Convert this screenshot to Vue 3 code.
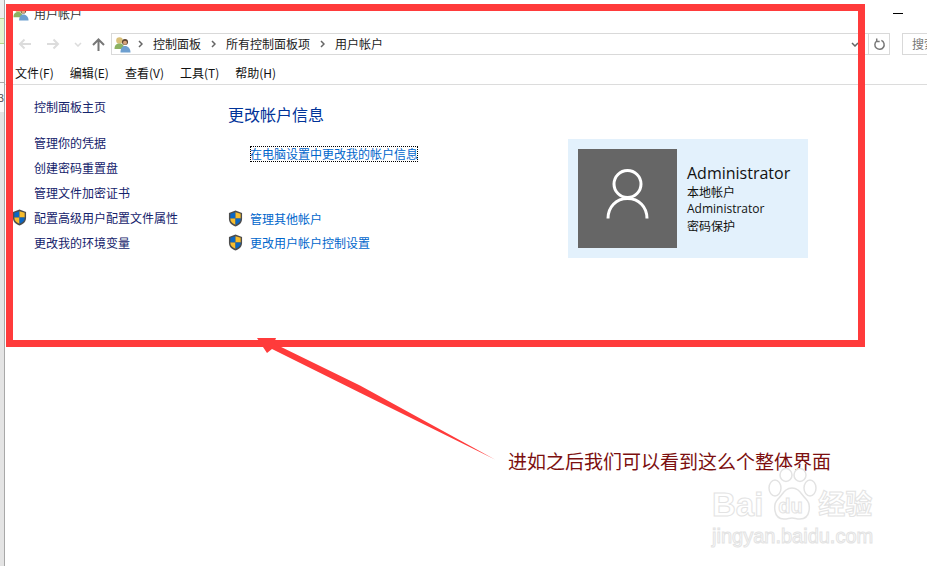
<script setup>
const crumbs = ['控制面板', '所有控制面板项', '用户帐户']
const menus = ['文件(F)', '编辑(E)', '查看(V)', '工具(T)', '帮助(H)']
const tasks = [
  { label: '管理你的凭据' },
  { label: '创建密码重置盘' },
  { label: '管理文件加密证书' },
  { label: '配置高级用户配置文件属性', shield: true },
  { label: '更改我的环境变量' }
]
const links = ['管理其他帐户', '更改用户帐户控制设置']
</script>

<template>
  <div class="page">
    <div class="strip">
      <div class="strip-top"></div>
      <div class="strip-green"></div>
      <div class="strip-mid"></div>
      <div class="strip-num">3</div>
      <div class="strip-rest"></div>
    </div>

    <div class="window">
      <div class="titlebar">
        <svg class="users-icon" viewBox="0 0 17 17">
          <circle cx="5.500" cy="4.500" r="3.300" fill="#d9c07a" />
          <path d="M.5 13c0-4 2-5.500 5-5.500S10 9 10 13z" fill="#8db262" />
          <circle cx="11" cy="6" r="3" fill="#5b4330" />
          <circle cx="11" cy="6.800" r="2" fill="#d9a77c" />
          <path d="M6.500 16.500c0-4 1.500-6.500 4.500-6.500s5.500 2.500 5.500 6.500z" fill="#6d9fd0" />
        </svg>
        <span class="title">用户帐户</span>
        <span class="minimize"></span>
      </div>

      <div class="navbar">
        <svg class="nav-btn back" viewBox="0 0 13 12"><path d="M13 6H2M6.500 1.500 2 6l4.500 4.500" /></svg>
        <svg class="nav-btn forward" viewBox="0 0 13 12"><path d="M0 6h11M6.500 1.500 11 6l-4.500 4.500" /></svg>
        <svg class="nav-drop" viewBox="0 0 8 5"><path d="M1 1l3 3 3-3" /></svg>
        <svg class="nav-up" viewBox="0 0 13 13"><path d="M6.500 13V2M1 7 6.500 1.500 12 7" /></svg>
        <div class="address">
          <svg class="users-icon big" viewBox="0 0 17 17">
            <circle cx="5.500" cy="4.500" r="3.300" fill="#d9c07a" />
            <path d="M.5 13c0-4 2-5.500 5-5.500S10 9 10 13z" fill="#8db262" />
            <circle cx="11" cy="6" r="3" fill="#5b4330" />
            <circle cx="11" cy="6.800" r="2" fill="#d9a77c" />
            <path d="M6.500 16.500c0-4 1.500-6.500 4.500-6.500s5.500 2.500 5.500 6.500z" fill="#6d9fd0" />
          </svg>
          <template v-for="c in crumbs" :key="c">
            <svg class="crumb-arrow" viewBox="0 0 5 8"><path d="M1 1l3 3-3 3" /></svg>
            <span class="crumb">{{ c }}</span>
          </template>
          <svg class="address-drop" viewBox="0 0 8 5"><path d="M1 1l3 3 3-3" /></svg>
        </div>
        <div class="refresh">
          <svg viewBox="0 0 14 14"><path d="M4 3.200a5 5 0 1 0 5-.600M4 .500v3.200h3.200" /></svg>
        </div>
        <div class="search">搜索</div>
      </div>

      <div class="menubar">
        <span v-for="m in menus" :key="m" class="menu">{{ m }}</span>
      </div>

      <div class="content">
        <aside class="sidebar">
          <div class="task home">控制面板主页</div>
          <div v-for="t in tasks" :key="t.label" class="task">
            <span class="task-icon">
              <svg v-if="t.shield" class="shield" viewBox="0 0 16 18">
                <path d="M8 .500 15 3v6.500c0 4-3 6.500-7 8-4-1.500-7-4-7-8V3z" fill="#4d4d4d" />
                <path d="M8 2.200V9H2.500V4z" fill="#0a67c4" />
                <path d="M8 2.200 13.500 4v5H8z" fill="#f8bd2c" />
                <path d="M2.500 9H8v6.700c-3-1.200-5.500-3.300-5.500-6.200z" fill="#f8bd2c" />
                <path d="M13.500 9H8v6.700c3-1.200 5.500-3.300 5.500-6.200z" fill="#0a67c4" />
              </svg>
            </span>
            {{ t.label }}
          </div>
        </aside>

        <section class="main">
          <h2 class="heading">更改帐户信息</h2>
          <div class="focus-row"><span class="focus-link">在电脑设置中更改我的帐户信息</span></div>
          <div class="links">
            <div v-for="l in links" :key="l" class="link-row">
              <span class="link-icon">
                <svg class="shield" viewBox="0 0 16 18">
                  <path d="M8 .500 15 3v6.500c0 4-3 6.500-7 8-4-1.500-7-4-7-8V3z" fill="#4d4d4d" />
                  <path d="M8 2.200V9H2.500V4z" fill="#0a67c4" />
                  <path d="M8 2.200 13.500 4v5H8z" fill="#f8bd2c" />
                  <path d="M2.500 9H8v6.700c-3-1.200-5.500-3.300-5.500-6.200z" fill="#f8bd2c" />
                  <path d="M13.500 9H8v6.700c3-1.200 5.500-3.300 5.500-6.200z" fill="#0a67c4" />
                </svg>
              </span>
              <span>{{ l }}</span>
            </div>
          </div>
        </section>

        <div class="user-card">
          <div class="avatar">
            <svg viewBox="0 0 99 99">
              <circle cx="49.500" cy="35" r="13.500" />
              <path d="M30 69.500C30 58 38 49.500 49.500 49.500S69 58 69 69.500" />
            </svg>
          </div>
          <div class="user-info">
            <div class="user-name">Administrator</div>
            <div class="user-line">本地帐户</div>
            <div class="user-line latin">Administrator</div>
            <div class="user-line">密码保护</div>
          </div>
        </div>
      </div>
    </div>

    <!-- 标注层：红框、箭头、说明文字、水印 -->
    <div class="red-frame"></div>
    <svg class="arrow" viewBox="0 0 927 566">
      <path d="M257 338H276L274 343.500L360 385.500L495 459.500L360 392.700L272 349L267 353Z" fill="#ff3b3b" />
    </svg>
    <div class="note">进如之后我们可以看到这么个整体界面</div>
    <div class="watermark">
      <div class="wm-logo">
        <span class="wm-text">Bai</span>
        <span class="wm-paw">
          <svg viewBox="0 0 50 52">
            <ellipse cx="8" cy="20" rx="6" ry="8" />
            <ellipse cx="19" cy="7" rx="6" ry="6.500" />
            <ellipse cx="33" cy="7" rx="6" ry="6.500" />
            <ellipse cx="43" cy="20" rx="6" ry="8" />
            <path d="M25 20c7 0 9 6 14 11 5 5 5 20-6 20-4 0-5-1-8-1s-4 1-8 1C6 51 6 36 11 31c5-5 7-11 14-11z" />
          </svg>
          <span class="wm-du">du</span>
        </span>
        <span class="wm-cn">经验</span>
      </div>
      <div class="wm-url">jingyan.baidu.com</div>
    </div>
  </div>
</template>

<style>
html,
body {
  margin: 0;
  background: #fff;
  overflow: hidden;
}
</style>

<style scoped>
.page {
  position: relative;
  display: flex;
  width: 927px;
  height: 566px;
  overflow: hidden;
  background: #fff;
  font-family: "Noto Sans CJK SC", "Liberation Sans", sans-serif;
  font-size: 12px;
  color: #000;
}

.strip {
  display: flex;
  flex-direction: column;
  flex: none;
  width: 4px;
  border-right: 1px solid #a8a8a8;
  background: #e6e6e6;
}

.strip-top {
  height: 18px;
  background: #eee;
}

.strip-green {
  height: 26px;
  background: #e4f5d0;
  border-top: 1px solid #b4d68c;
  border-bottom: 1px solid #b4d68c;
  box-sizing: border-box;
}

.strip-mid {
  height: 38px;
  background: #fafafa;
  border-bottom: 1px solid #aaa;
}

.strip-num {
  height: 29px;
  background: #fafafa;
  overflow: hidden;
  line-height: 29px;
  font-size: 11px;
  direction: rtl;
  color: #555;
}

.strip-rest {
  flex: 1;
  background: #e4e4e4;
}

.window {
  flex: 1;
  min-width: 0;
  display: flex;
  flex-direction: column;
}

.titlebar {
  display: flex;
  align-items: center;
  height: 26px;
  padding-left: 8px;
  flex: none;
}

.users-icon {
  width: 16px;
  height: 16px;
  flex: none;
}

.title {
  margin-left: 5px;
  color: #333;
}

.minimize {
  width: 10px;
  height: 1px;
  margin-left: auto;
  margin-right: 24px;
  background: #000;
}

.navbar {
  display: flex;
  align-items: center;
  height: 22px;
  margin-top: 7px;
  flex: none;
}

.nav-btn {
  width: 13px;
  height: 12px;
  flex: none;
  fill: none;
  stroke: #dcdcdc;
  stroke-width: 2;
}

.back {
  margin-left: 13px;
}

.forward {
  margin-left: 16px;
}

.nav-drop {
  width: 8px;
  height: 5px;
  margin-left: 14px;
  flex: none;
  fill: none;
  stroke: #dcdcdc;
  stroke-width: 1.500;
}

.nav-up {
  width: 13px;
  height: 13px;
  margin-left: 10px;
  flex: none;
  fill: none;
  stroke: #777;
  stroke-width: 2;
}

.address {
  display: flex;
  align-items: center;
  width: 758px;
  height: 22px;
  margin-left: 6px;
  padding-left: 2px;
  padding-bottom: 2px;
  box-sizing: border-box;
  flex: none;
  border: 1px solid #d9d9d9;
}

.big {
  width: 17px;
  height: 17px;
  margin-top: 2px;
  margin-right: -3px;
}

.crumb-arrow {
  width: 5px;
  height: 8px;
  margin-top: 2px;
  margin-left: 10px;
  margin-right: 10px;
  flex: none;
  fill: none;
  stroke: #666;
  stroke-width: 1.500;
}

.crumb {
  color: #222;
}

.address-drop {
  width: 8px;
  height: 5px;
  margin-top: 2px;
  margin-left: auto;
  margin-right: 9px;
  flex: none;
  fill: none;
  stroke: #666;
  stroke-width: 1.500;
}

.refresh {
  display: flex;
  align-items: center;
  justify-content: center;
  width: 21px;
  height: 22px;
  box-sizing: border-box;
  flex: none;
  border: 1px solid #d9d9d9;
  border-left: 0;
}

.refresh svg {
  width: 13px;
  height: 13px;
  fill: none;
  stroke: #777;
  stroke-width: 1.600;
}

.search {
  width: 60px;
  height: 22px;
  margin-left: 12px;
  padding-left: 9px;
  box-sizing: border-box;
  flex: none;
  border: 1px solid #d9d9d9;
  line-height: 20px;
  color: #777;
}

.menubar {
  display: flex;
  align-items: center;
  gap: 16px;
  height: 30px;
  padding-top: 6px;
  padding-left: 10px;
  box-sizing: border-box;
  flex: none;
  border-bottom: 1px solid #dcdcdc;
}

.menu {
  color: #111;
}

.content {
  flex: 1;
  display: flex;
  align-items: flex-start;
}

.sidebar {
  width: 223px;
  padding-top: 9px;
  flex: none;
}

.task {
  display: flex;
  align-items: center;
  height: 25px;
  padding-left: 7px;
  color: #14226b;
}

.home {
  padding-left: 29px;
  margin-bottom: 11px;
}

.task-icon {
  display: flex;
  width: 22px;
  flex: none;
}

.shield {
  display: block;
  width: 15px;
  height: 17px;
  flex: none;
}

.main {
  width: 340px;
  flex: none;
}

.heading {
  margin: 19px 0 0;
  font-size: 16px;
  font-weight: 400;
  line-height: 20px;
  color: #003399;
}

.focus-row {
  margin-top: 22px;
  padding-left: 22px;
  line-height: 16px;
  height: 16px;
}

.focus-link {
  display: block;
  width: 168px;
  outline: 1px dotted #000;
  outline-offset: -1px;
  color: #0066cc;
}

.links {
  margin-top: 44px;
}

.link-row {
  display: flex;
  align-items: center;
  height: 24.500px;
  color: #0066cc;
}

.link-icon {
  width: 22px;
  flex: none;
}

.user-card {
  display: flex;
  width: 240px;
  height: 119px;
  margin-top: 54px;
  padding: 10px;
  box-sizing: border-box;
  flex: none;
  background: #e3f1fc;
}

.avatar {
  width: 99px;
  height: 99px;
  flex: none;
  background: #666;
}

.avatar svg {
  display: block;
  width: 99px;
  height: 99px;
  fill: none;
  stroke: #fff;
  stroke-width: 3;
}

.user-info {
  margin-left: 10px;
  padding-top: 14px;
  color: #111;
}

.user-name {
  font-family: "Open Sans", "Noto Sans CJK SC", sans-serif;
  font-size: 16px;
  line-height: 20px;
}

.user-line {
  height: 17px;
  line-height: 17px;
}

.latin {
  font-family: "Open Sans", "Noto Sans CJK SC", sans-serif;
}

.red-frame {
  position: absolute;
  left: 6px;
  top: 4px;
  width: 859px;
  height: 343px;
  box-sizing: border-box;
  border: 7px solid #ff3b3b;
}

.arrow {
  position: absolute;
  left: 0;
  top: 0;
  width: 927px;
  height: 566px;
}

.note {
  position: absolute;
  left: 508px;
  top: 449px;
  font-size: 19px;
  line-height: 24px;
  white-space: nowrap;
  color: #7c0f0f;
}

.watermark {
  position: absolute;
  left: 712px;
  top: 468px;
  width: 170px;
  color: transparent;
}

.wm-logo {
  display: flex;
  align-items: flex-end;
  height: 52px;
}

.wm-text,
.wm-du,
.wm-cn,
.wm-url {
  font-family: "Liberation Sans", "Noto Sans CJK SC", sans-serif;
  font-weight: 700;
  -webkit-text-stroke: 1px #e3e3e3;
}

.wm-text {
  font-size: 33px;
  line-height: 30px;
}

.wm-paw {
  position: relative;
  width: 50px;
  height: 52px;
  margin-left: 4px;
  flex: none;
}

.wm-paw svg {
  display: block;
  width: 50px;
  height: 52px;
  fill: #fff;
  stroke: #e3e3e3;
  stroke-width: 1.500;
}

.wm-du {
  position: absolute;
  left: 11px;
  top: 27px;
  font-size: 20px;
  line-height: 22px;
}

.wm-cn {
  font-size: 27px;
  line-height: 30px;
  margin-left: 1px;
  white-space: nowrap;
}

.wm-url {
  margin-top: 3px;
  font-size: 20px;
  font-weight: 400;
  line-height: 26px;
  white-space: nowrap;
}
</style>
